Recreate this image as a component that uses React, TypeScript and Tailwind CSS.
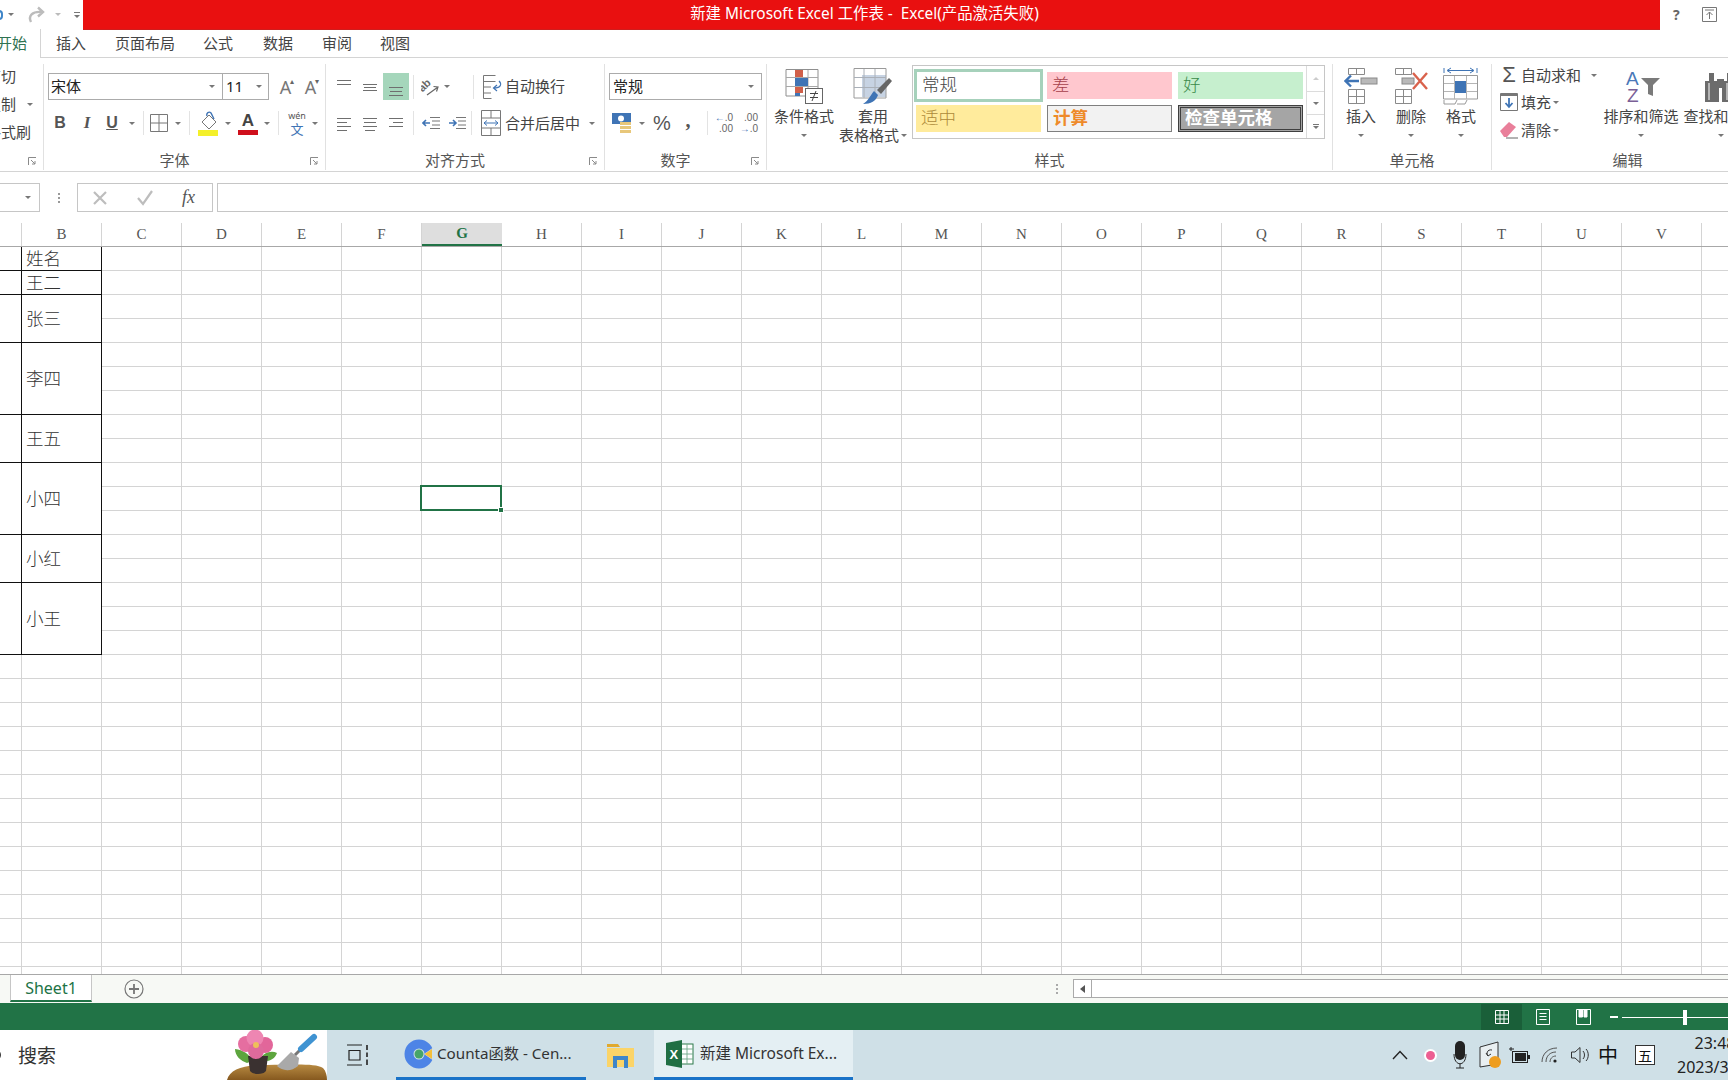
import type { ReactNode } from "react";

const columns = ["B", "C", "D", "E", "F", "G", "H", "I", "J", "K", "L", "M", "N", "O", "P", "Q", "R", "S", "T", "U", "V", ""];

const names = [
  { row: 0, span: "row-span-1", name: "姓名" },
  { row: 1, span: "row-span-1", name: "王二" },
  { row: 2, span: "row-span-2", name: "张三" },
  { row: 4, span: "row-span-3", name: "李四" },
  { row: 7, span: "row-span-2", name: "王五" },
  { row: 9, span: "row-span-3", name: "小四" },
  { row: 12, span: "row-span-2", name: "小红" },
  { row: 14, span: "row-span-3", name: "小王" },
];

const rowCount = 31;

function Caret({ className = "" }: { className?: string }) {
  return <span className={`inline-block h-0 w-0 shrink-0 border-x-[3px] border-t-[3px] border-x-transparent border-t-[#777] ${className}`} />;
}

function Sep({ className = "" }: { className?: string }) {
  return <span className={`block h-[24px] w-px shrink-0 bg-[#e3e3e3] ${className}`} />;
}

function Launcher() {
  return (
    <svg className="absolute bottom-[4px] right-[6px]" width="9" height="9" viewBox="0 0 9 9" fill="none" stroke="#8a8a8a" strokeWidth="1">
      <path d="M0.5 8V0.5H8" />
      <path d="M3 3l4 4M7 4v3H4" />
    </svg>
  );
}

function Group({ width, label, launcher, labelClass = "", children }: { width: string; label: string; launcher?: boolean; labelClass?: string; children: ReactNode }) {
  return (
    <section className={`relative flex h-[106px] shrink-0 flex-col border-r border-[#e1e1e1] ${width}`}>
      <div className="min-h-0 flex-1">{children}</div>
      <div className={`h-[20px] text-center text-[15px] leading-[20px] text-[#555] ${labelClass}`}>{label}</div>
      {launcher && <Launcher />}
    </section>
  );
}

function Lines({ y, align }: { y: number[]; align: "left" | "center" | "right" }) {
  return (
    <svg width="20" height="18" viewBox="0 0 20 18" stroke="#6f6f6f" strokeWidth="1">
      <path d={`M3 ${y[0]}.5H17`} />
      {align === "left" && <path d={`M3 ${y[1]}.5H13`} />}
      {align === "center" && <path d={`M4 ${y[1]}.5H16`} />}
      {align === "right" && <path d={`M7 ${y[1]}.5H17`} />}
      <path d={`M3 ${y[2]}.5H17`} />
      {y[3] !== undefined && <path d={`M${align === "center" ? 5 : 3} ${y[3]}.5H${align === "center" ? 15 : 13}`} />}
    </svg>
  );
}

function BigButton({ width, lines, caret = true, children }: { width: string; lines: string[]; caret?: boolean; children: ReactNode }) {
  return (
    <div className={`flex shrink-0 flex-col items-center ${width}`}>
      <div className="flex h-[43px] items-center justify-center">{children}</div>
      {lines.map((line) => (
        <div key={line} className="whitespace-nowrap text-[15px] leading-[19px] text-[#444]">
          {line}
        </div>
      ))}
      {caret && <Caret className="mt-[8px]" />}
    </div>
  );
}

function CondIcon() {
  return (
    <svg width="38" height="36" viewBox="0 0 38 36" fill="none">
      <path d="M1 1.5H33V28H1z" stroke="#8f8f8f" />
      <path d="M12 2V28M23 2V28M1 9.5H33M1 18.5H33" stroke="#a8a8a8" />
      <rect x="10" y="2" width="8" height="7" fill="#d0604a" />
      <rect x="10" y="10" width="13" height="8" fill="#3f74b5" />
      <rect x="10" y="19" width="8" height="6" fill="#d0604a" />
      <rect x="10" y="25" width="5" height="3" fill="#3f74b5" />
      <rect x="20.5" y="20.5" width="17" height="15" fill="#fff" stroke="#666" />
      <path d="M25 25.5H33M25 29.5H33M31 23L27 33" stroke="#444" />
    </svg>
  );
}

function TableIcon() {
  return (
    <svg width="40" height="38" viewBox="0 0 40 38" fill="none">
      <rect x="9" y="8" width="24" height="22" fill="#c7d3e3" />
      <path d="M1 1.5H33V31H1z" stroke="#9a9a9a" />
      <path d="M11 2V31M22 2V31M1 10.5H33M1 20.5H33" stroke="#aab0b8" />
      <path d="M24 23L36 11L39 14L28 27z" fill="#666" />
      <path d="M21 24l4 4c-2 6-7 9-15 9 5-3 7-8 11-13z" fill="#3f74b5" />
    </svg>
  );
}

function InsertIcon() {
  return (
    <svg width="34" height="36" viewBox="0 0 34 36" fill="none" stroke="#8a8a8a">
      <path d="M4.5 .5H20.5V6.5H4.5zM12.5 .5V6.5" />
      <rect x="17" y="10" width="16" height="6" fill="#b9b9b9" />
      <path d="M15 13H2M7 7.5L1.5 13L7 18.5" stroke="#3f74b5" strokeWidth="2.4" />
      <path d="M4.5 21.5H20.5V35.5H4.5zM12.5 21.5V35.5M4.5 28.5H20.5" />
    </svg>
  );
}

function DeleteIcon() {
  return (
    <svg className="ml-[2px]" width="36" height="36" viewBox="0 0 36 36" fill="none" stroke="#8a8a8a">
      <path d="M1.5 .5H17.5V6.5H1.5zM9.5 .5V6.5" />
      <rect x="8" y="10" width="12" height="6" fill="#b9b9b9" />
      <path d="M19 5L33 21M33 5L19 21" stroke="#d9624c" strokeWidth="2.4" />
      <path d="M1.5 21.5H17.5V35.5H1.5zM9.5 21.5V35.5M1.5 28.5H17.5" />
    </svg>
  );
}

function FormatIcon() {
  return (
    <svg width="36" height="38" viewBox="0 0 36 38" fill="none">
      <path d="M1 1V6M34 1V6" stroke="#3f74b5" />
      <path d="M5 3.5H30M8 1L4 3.5L8 6M27 1L31 3.5L27 6" stroke="#3f74b5" />
      <path d="M.5 8.5H34.5V32H.5z" stroke="#999" />
      <path d="M11.5 9V32M23.5 9V32M1 16.5H34M1 24.5H34" stroke="#b5b5b5" />
      <rect x="12" y="14" width="11" height="12" fill="#3f74b5" />
      <path d="M1 33V37H12L14 33M14 37H22L24 33" stroke="#999" />
    </svg>
  );
}

function SortIcon() {
  return (
    <svg className="ml-[4px]" width="36" height="34" viewBox="0 0 36 34" fill="none">
      <text x="1" y="16" fontFamily="Liberation Sans, sans-serif" fontSize="19" fill="#4a78b8">A</text>
      <text x="2" y="33" fontFamily="Liberation Sans, sans-serif" fontSize="19" fill="#7a5f96">Z</text>
      <path d="M16 9H35L28 16V27L23 25V16z" fill="#7a7a7a" />
    </svg>
  );
}

function BinocularIcon() {
  return (
    <svg width="34" height="32" viewBox="0 0 34 32" fill="#6c6c6c">
      <rect x="5" y="3" width="5" height="8" />
      <rect x="23" y="3" width="5" height="8" />
      <rect x="1" y="11" width="14" height="21" />
      <rect x="18" y="11" width="14" height="21" />
      <rect x="13" y="9" width="7" height="9" />
      <path d="M5 13V30M23 13V30" stroke="#fff" strokeWidth="1" />
    </svg>
  );
}

function Flowerpot() {
  return (
    <svg width="100" height="50" viewBox="0 0 100 50" className="shrink-0">
      <defs>
        <linearGradient id="mound" x1="0" y1="0" x2="0" y2="1">
          <stop offset="0" stopColor="#b78a42" />
          <stop offset="1" stopColor="#86591f" />
        </linearGradient>
      </defs>
      <path d="M0 50C3 39 17 35 40 35S88 33 96 38C99 41 100 46 100 50z" fill="url(#mound)" />
      <path d="M20 33C14 31 8 26 8 19C16 20 23 24 25 31zM35 31C42 32 48 29 50 23C44 20 36 23 33 29z" fill="#5da53e" />
      <path d="M21 26H41L39 41C36 45 26 45 23 41z" fill="#3a3130" />
      <circle cx="19" cy="14" r="8" fill="#e56ea0" />
      <circle cx="38" cy="15" r="8" fill="#e2669a" />
      <circle cx="28" cy="8" r="8.5" fill="#ee86b2" />
      <circle cx="29" cy="21" r="8" fill="#df6a9c" />
      <circle cx="29" cy="15" r="3" fill="#eec05a" />
      <path d="M50 36L64 22L72 28L71 36C64 42 55 41 50 36z" fill="#a9a9a9" />
      <path d="M68 25L74 19" stroke="#777" strokeWidth="3" />
      <path d="M74 19L87 7" stroke="#3f93d2" strokeWidth="6" strokeLinecap="round" />
    </svg>
  );
}

function TaskViewIcon() {
  return (
    <svg width="22" height="22" viewBox="0 0 22 22" fill="none" stroke="#222" strokeWidth="1.2">
      <path d="M0 1H15M0 21H15M2 6.5H13V16H2z" />
      <path d="M20 1V6M20 8.5V13M20 15.5V21" strokeWidth="1.6" />
    </svg>
  );
}

function CountaIcon() {
  return (
    <svg width="30" height="30" viewBox="0 0 30 30">
      <circle cx="15" cy="15" r="10" fill="none" stroke="#4d84e6" strokeWidth="9" />
      <circle cx="15" cy="15" r="4.5" fill="#46a56a" />
      <path d="M30 8L20 15L30 22z" fill="#cfe0e7" />
      <path d="M28 10L20.5 15L28 20z" fill="#f4bf3a" />
    </svg>
  );
}

function FolderIcon() {
  return (
    <svg width="27" height="26" viewBox="0 0 27 26">
      <path d="M0 2H11L13 5H0z" fill="#e0a92e" />
      <rect x="0" y="6" width="27" height="19" fill="#fbd468" />
      <path d="M6 26V14H21V26H17V18H10V26z" fill="#3f86c9" />
    </svg>
  );
}

function ExcelIcon() {
  return (
    <svg width="28" height="28" viewBox="0 0 28 28">
      <rect x="11" y="4" width="16" height="20" fill="#fff" stroke="#2c7a4b" />
      <path d="M15 4V24M21 4V24M11 9H27M11 14H27M11 19H27" stroke="#6fa88a" strokeWidth=".9" />
      <path d="M0 3L16 0V28L0 25z" fill="#1f6e43" />
      <text x="3.5" y="19" fontFamily="Liberation Sans, sans-serif" fontWeight="700" fontSize="13" fill="#fff">X</text>
    </svg>
  );
}

export default function App() {
  return (
    <div className="flex h-[1080px] w-[1728px] flex-col overflow-hidden bg-white font-['Noto_Sans','Noto_Sans_CJK_SC',sans-serif] text-[#444]">
      {/* title bar */}
      <header className="flex h-[29px] shrink-0">
        <div className="flex w-[83px] shrink-0 items-center">
          <span className="ml-[-5px] h-[10px] w-[8px] rounded-full border-2 border-[#3f86c9]" />
          <Caret className="ml-[5px]" />
          <svg className="ml-[13px]" width="20" height="18" viewBox="0 0 20 18" fill="none" stroke="#bcbcbc" strokeWidth="2.4">
            <path d="M4 16C1 10 5 5 15 6M11 1.5L16 6L11 10.5" />
          </svg>
          <Caret className="ml-[8px] opacity-50" />
          <span className="ml-[13px] flex flex-col items-center gap-[2px]">
            <span className="h-px w-[6px] bg-[#777]" />
            <Caret />
          </span>
        </div>
        <div className="flex flex-1 items-center justify-center bg-[#e91010] pb-[2px] pr-[14px] text-[15.4px] text-white shadow-[0_1px_0_#cf1d1d]">
          新建 Microsoft Excel 工作表 -&nbsp; Excel(产品激活失败)
        </div>
        <div className="flex w-[68px] shrink-0 items-center pl-[13px] text-[#666]">
          <span className="text-[14px] font-bold">?</span>
          <svg className="ml-[22px]" width="15" height="15" viewBox="0 0 15 15" fill="none" stroke="#777">
            <path d="M.5 .5H14.5V14.5H.5zM3 3H12M7.5 12V5M4.5 8L7.5 5L10.5 8" />
          </svg>
        </div>
      </header>

      {/* tabs */}
      <nav className="flex h-[29px] shrink-0 items-stretch border-b border-[#d4d4d4] text-[15px]">
        <div className="relative z-10 -mb-px flex w-[41px] justify-end border-r border-[#d4d4d4] bg-white pr-[13px] leading-[28px] text-[#2f7251]">
          <span className="whitespace-nowrap">开始</span>
        </div>
        <div className="ml-[15px] leading-[28px]">插入</div>
        <div className="ml-[29px] leading-[28px]">页面布局</div>
        <div className="ml-[28px] leading-[28px]">公式</div>
        <div className="ml-[30px] leading-[28px]">数据</div>
        <div className="ml-[29px] leading-[28px]">审阅</div>
        <div className="ml-[28px] leading-[28px]">视图</div>
      </nav>

      {/* ribbon */}
      <div className="flex h-[114px] shrink-0 border-b border-[#d4d4d4] pt-[6px]">
        <Group width="w-[44px]" label="" launcher>
          <div className="-mt-[2px] flex flex-col text-[15px]">
            <div className="flex h-[28px] w-[16px] items-center justify-end whitespace-nowrap">剪切</div>
            <div className="flex h-[28px] items-center">
              <div className="flex w-[16px] justify-end whitespace-nowrap">复制</div>
              <Caret className="ml-[11px]" />
            </div>
            <div className="flex h-[28px] w-[31px] items-center justify-end whitespace-nowrap">格式刷</div>
          </div>
        </Group>

        <Group width="w-[282px]" label="字体" launcher labelClass="pr-[20px]">
          <div className="ml-[4px] mt-[9px] flex h-[27px] items-center">
            <div className="flex h-full w-[175px] items-center justify-between border border-[#ababab] pl-[2px] pr-[7px] text-[15px] text-[#222]">
              宋体
              <Caret />
            </div>
            <div className="-ml-px flex h-full w-[47px] items-center justify-between border border-[#ababab] pl-[3px] pr-[6px] text-[15px] text-[#222]">
              11
              <Caret />
            </div>
            <div className="ml-[6px] flex w-[24px] items-start justify-center text-[18px] leading-[20px] text-[#777]">
              A<span className="-ml-px text-[8px] leading-[8px] text-[#666]">▴</span>
            </div>
            <div className="ml-[1px] flex w-[24px] items-start justify-center text-[18px] leading-[20px] text-[#777]">
              A<span className="-ml-px text-[8px] leading-[8px] text-[#666]">▾</span>
            </div>
          </div>
          <div className="ml-[3px] mt-[8px] flex h-[30px] items-center">
            <div className="w-[26px] text-center font-['Liberation_Sans',sans-serif] text-[16px] font-bold text-[#555]">B</div>
            <div className="ml-[1px] w-[26px] text-center font-['Liberation_Serif',serif] text-[17px] font-bold italic text-[#555]">I</div>
            <div className="w-[24px] text-center font-['Liberation_Sans',sans-serif] text-[16px] font-bold text-[#555] underline">U</div>
            <Caret className="ml-[5px]" />
            <Sep className="ml-[8px]" />
            <svg className="ml-[6px]" width="18" height="18" viewBox="0 0 18 18" fill="none" stroke="#777">
              <path d="M.5 .5H17.5V17.5H.5zM9 1V17M1 9H17" />
            </svg>
            <Caret className="ml-[7px]" />
            <Sep className="ml-[8px]" />
            <svg className="ml-[8px]" width="22" height="25" viewBox="0 0 22 25" fill="none">
              <path d="M4 11L11 4L18 11L11 18z" stroke="#777" fill="#fff" />
              <path d="M9 5C8 2 11 0 13 2L16 8" stroke="#3f74b5" strokeWidth="1.4" />
              <rect x="0" y="19" width="20" height="6" fill="#f4f02a" />
            </svg>
            <Caret className="ml-[5px]" />
            <div className="ml-[7px] flex w-[20px] flex-col items-center">
              <span className="font-['Liberation_Sans',sans-serif] text-[17px] font-bold leading-[18px] text-[#444]">A</span>
              <span className="h-[5px] w-[20px] bg-[#cf0f1c]" />
            </div>
            <Caret className="ml-[6px]" />
            <Sep className="ml-[8px]" />
            <div className="ml-[8px] flex w-[20px] flex-col items-center text-[#3f74b5]">
              <span className="h-[11px] text-[9px] leading-[10px] text-[#555]">wén</span>
              <span className="h-[14px] text-[13px] leading-[14px]">文</span>
            </div>
            <Caret className="ml-[5px]" />
          </div>
        </Group>

        <Group width="w-[279px]" label="对齐方式" launcher labelClass="pr-[20px]">
          <div className="ml-[5px] mt-[9px] flex h-[27px] items-center">
            <div className="flex w-[26px] justify-center"><Lines y={[2, 6, 6]} align="left" /></div>
            <div className="flex w-[26px] justify-center"><Lines y={[6, 9, 12]} align="center" /></div>
            <div className="flex h-full w-[26px] items-end justify-center bg-[#a5d6bb] pb-[3px]"><Lines y={[8, 12, 16]} align="center" /></div>
            <Sep className="ml-[4px]" />
            <svg className="ml-[7px]" width="20" height="22" viewBox="0 0 20 22" fill="none">
              <text x="0" y="13" transform="rotate(-45 5 13)" fontFamily="Liberation Sans, sans-serif" fontSize="11" fontWeight="700" fill="#666">ab</text>
              <path d="M6 19L17 11M12.5 10.5L17 11L15.5 15.5" stroke="#666" strokeWidth="1.2" />
            </svg>
            <Caret className="ml-[3px]" />
            <span className="w-[23px]" />
            <Sep />
            <svg className="ml-[9px]" width="20" height="24" viewBox="0 0 20 24" fill="none" stroke="#777">
              <path d="M.5 .5H12.5M.5 .5V23.5H8.5M.5 6.5H12.5M.5 12H8M.5 18H8" />
              <path d="M16 6C19 9 18 13 11 13M14 10L10.5 13L14 16" stroke="#3f74b5" strokeWidth="1.2" />
            </svg>
            <span className="ml-[2px] whitespace-nowrap text-[15px] text-[#444]">自动换行</span>
          </div>
          <div className="ml-[5px] mt-[8px] flex h-[30px] items-center">
            <div className="flex w-[26px] justify-center"><Lines y={[4, 8, 12, 16]} align="left" /></div>
            <div className="flex w-[26px] justify-center"><Lines y={[4, 8, 12, 16]} align="center" /></div>
            <div className="flex w-[26px] justify-center"><Lines y={[4, 8, 12]} align="right" /></div>
            <Sep className="ml-[4px]" />
            <svg className="ml-[8px]" width="18" height="14" viewBox="0 0 18 14" fill="none" stroke="#777">
              <path d="M8 1.5H18M10 5H18M10 9H18M8 12.5H18" />
              <path d="M8 7H1M4 4L1 7L4 10" stroke="#3f74b5" strokeWidth="1.6" />
            </svg>
            <svg className="ml-[8px]" width="18" height="14" viewBox="0 0 18 14" fill="none" stroke="#777">
              <path d="M8 1.5H18M10 5H18M10 9H18M8 12.5H18" />
              <path d="M1 7H8M5 4L8 7L5 10" stroke="#3f74b5" strokeWidth="1.6" />
            </svg>
            <span className="w-[5px]" />
            <Sep />
            <svg className="ml-[9px]" width="20" height="26" viewBox="0 0 20 26" fill="none" stroke="#777">
              <path d="M.5 .5H19.5V25.5H.5zM.5 8H19.5M.5 18H19.5M10 1V8M10 18V25" />
              <path d="M3 13H17M6 10.5L3 13L6 15.5M14 10.5L17 13L14 15.5" stroke="#3f74b5" />
            </svg>
            <span className="ml-[4px] whitespace-nowrap text-[15px] text-[#444]">合并后居中</span>
            <Caret className="ml-[9px]" />
          </div>
        </Group>

        <Group width="w-[162px]" label="数字" launcher labelClass="pr-[20px]">
          <div className="ml-[4px] mt-[9px] flex h-[27px] w-[153px] items-center justify-between border border-[#ababab] pl-[3px] pr-[7px] text-[15px] text-[#222]">
            常规
            <Caret />
          </div>
          <div className="ml-[6px] mt-[8px] flex h-[30px] items-center">
            <svg width="22" height="22" viewBox="0 0 22 22">
              <rect x="1" y="1" width="19" height="11" fill="#3f74b5" />
              <circle cx="10" cy="6.5" r="3" fill="#fff" />
              <rect x="9" y="10" width="11" height="3" fill="#e8c77a" />
              <rect x="9" y="14" width="11" height="3" fill="#e8c77a" />
              <rect x="9" y="18" width="11" height="3" fill="#e8c77a" />
            </svg>
            <Caret className="ml-[6px]" />
            <span className="ml-[6px] w-[22px] text-center font-['Liberation_Sans',sans-serif] text-[20px] text-[#555]">%</span>
            <span className="ml-[3px] -mt-[6px] w-[24px] text-center font-['Liberation_Serif',serif] text-[20px] font-bold leading-[20px] text-[#555]">,</span>
            <Sep className="ml-[7px]" />
            <div className="ml-[3px] w-[22px] text-right font-['Liberation_Sans',sans-serif] text-[10px] leading-[11px] text-[#666]">
              <span className="text-[#3f74b5]">←</span>.0
              <br />
              .00
            </div>
            <div className="ml-[3px] w-[22px] text-right font-['Liberation_Sans',sans-serif] text-[10px] leading-[11px] text-[#666]">
              .00
              <br />
              <span className="text-[#3f74b5]">→</span>.0
            </div>
          </div>
        </Group>

        <Group width="w-[566px]" label="样式" labelClass="">
          <div className="flex">
            <BigButton width="w-[68px] ml-[3px]" lines={["条件格式"]}>
              <CondIcon />
            </BigButton>
            <div className="flex w-[70px] shrink-0 flex-col items-center">
              <div className="flex h-[43px] items-center justify-center">
                <TableIcon />
              </div>
              <div className="text-[15px] leading-[19px]">套用</div>
              <div className="flex items-center whitespace-nowrap text-[15px] leading-[19px]">
                表格格式
                <Caret className="ml-[2px]" />
              </div>
            </div>
            <div className="ml-[4px] mt-[1px] flex h-[74px] w-[413px] shrink-0 border border-[#c6c6c6]">
              <div className="grid flex-1 grid-cols-[133px_131px_125px] grid-rows-[33px_33px] pl-[1px] pt-[3px] font-['Liberation_Serif','Noto_Sans_CJK_SC',serif] text-[17.5px] font-light">
                <div className="flex h-[33px] w-[129px] items-center border-[3px] border-[#a6d1bb] pl-[5px] text-[#444]">常规</div>
                <div className="my-[3px] flex h-[27px] w-[125px] items-center bg-[#ffc7ce] pl-[5px] text-[#a5404b]">差</div>
                <div className="my-[3px] flex h-[27px] w-[125px] items-center bg-[#c6efce] pl-[5px] text-[#3a8a4a]">好</div>
                <div className="my-[3px] ml-[2px] flex h-[27px] w-[125px] items-center bg-[#ffeb9c] pl-[5px] text-[#ad8a3a]">适中</div>
                <div className="my-[3px] flex h-[27px] w-[125px] items-center border border-[#7f7f7f] bg-[#f2f2f2] pl-[5px] font-bold text-[#ee8a2a]">计算</div>
                <div className="my-[3px] flex h-[27px] w-[125px] items-center whitespace-nowrap border-[3px] border-double border-[#3f3f3f] bg-[#a5a5a5] pl-[4px] font-bold text-white">检查单元格</div>
              </div>
              <div className="flex w-[18px] shrink-0 flex-col border-l border-[#dcdcdc]">
                <div className="flex h-[26px] items-center justify-center border-b border-[#dcdcdc]"><span className="h-0 w-0 border-x-[3px] border-b-[3px] border-x-transparent border-b-[#ccc]" /></div>
                <div className="flex h-[23px] items-center justify-center border-b border-[#dcdcdc]"><Caret /></div>
                <div className="flex flex-1 flex-col items-center justify-center gap-[1px]"><span className="h-px w-[6px] bg-[#777]" /><Caret /></div>
              </div>
            </div>
          </div>
        </Group>

        <Group width="w-[159px]" label="单元格">
          <div className="ml-[3px] flex">
            <BigButton width="w-[50px]" lines={["插入"]}>
              <InsertIcon />
            </BigButton>
            <BigButton width="w-[50px]" lines={["删除"]}>
              <DeleteIcon />
            </BigButton>
            <BigButton width="w-[50px]" lines={["格式"]}>
              <FormatIcon />
            </BigButton>
          </div>
        </Group>

        <Group width="w-[272px]" label="编辑">
          <div className="flex">
            <div className="-mt-[2px] ml-[5px] mr-[1px] flex w-[105px] shrink-0 flex-col text-[15px]">
              <div className="flex h-[26px] items-center">
                <span className="flex h-[24px] w-[24px] items-center justify-center font-['Liberation_Sans',sans-serif] text-[22px] leading-[24px] text-[#555]">Σ</span>
                <span className="whitespace-nowrap">自动求和</span>
                <Caret className="ml-[10px]" />
              </div>
              <div className="flex h-[28px] items-center">
                <span className="flex w-[24px] justify-center">
                  <svg width="18" height="18" viewBox="0 0 18 18" fill="none">
                    <path d="M.5 .5H17.5V17.5H.5z" stroke="#777" />
                    <rect x="1" y="1" width="16" height="2" fill="#777" />
                    <path d="M9 5V14M5.5 10L9 14L12.5 10" stroke="#3f74b5" strokeWidth="1.8" />
                  </svg>
                </span>
                <span className="whitespace-nowrap">填充</span>
                <Caret className="ml-[2px]" />
              </div>
              <div className="flex h-[28px] items-center">
                <span className="flex w-[24px] justify-center">
                  <svg width="20" height="18" viewBox="0 0 20 18">
                    <path d="M1 10L10 1L17 6L8 16H5z" fill="#e97f9a" />
                    <path d="M7 17H19" stroke="#666" />
                  </svg>
                </span>
                <span className="whitespace-nowrap">清除</span>
                <Caret className="ml-[2px]" />
              </div>
            </div>
            <BigButton width="w-[76px]" lines={["排序和筛选"]}>
              <SortIcon />
            </BigButton>
            <div className="ml-[4px] flex w-[76px] shrink-0 flex-col items-center">
              <div className="flex h-[43px] items-center justify-center">
                <BinocularIcon />
              </div>
              <div className="whitespace-nowrap text-[15px] leading-[19px]">查找和选择</div>
              <Caret className="mt-[8px]" />
            </div>
          </div>
        </Group>
      </div>

      {/* formula bar */}
      <div className="mt-[11px] flex h-[29px] shrink-0 items-stretch">
        <div className="flex w-[40px] items-center justify-end border-y border-r border-[#c6c6c6] pr-[8px]">
          <Caret />
        </div>
        <div className="flex w-[37px] flex-col items-center justify-center gap-[2px]">
          <span className="h-[2px] w-[2px] bg-[#999]" />
          <span className="h-[2px] w-[2px] bg-[#999]" />
          <span className="h-[2px] w-[2px] bg-[#999]" />
        </div>
        <div className="flex w-[136px] items-center border border-[#c6c6c6] pl-[15px]">
          <svg width="14" height="14" viewBox="0 0 14 14" stroke="#bdbdbd" strokeWidth="2.2">
            <path d="M1 1L13 13M13 1L1 13" />
          </svg>
          <svg className="ml-[29px]" width="18" height="16" viewBox="0 0 18 16" fill="none" stroke="#bdbdbd" strokeWidth="2.2">
            <path d="M2 8L7 14L16 1" />
          </svg>
          <span className="ml-[28px] font-['Liberation_Serif',serif] text-[18px] italic text-[#555]">fx</span>
        </div>
        <div className="ml-[4px] flex-1 border border-[#c6c6c6] border-r-0" />
      </div>

      {/* column header */}
      <div className="mt-[11px] flex h-[24px] w-[1782px] shrink-0 border-b border-[#a8a8a8] font-['Liberation_Serif',serif] text-[15px] text-[#555]">
        <div className="w-[22px] shrink-0 border-r border-[#d4d4d4]" />
        {columns.map((col) =>
          col === "G" ? (
            <div key="G" className="flex w-[80px] shrink-0 items-center justify-center border-b-2 border-[#217346] bg-[#dedede] font-bold text-[#217346]">
              {col}
            </div>
          ) : (
            <div key={col || "W"} className="flex w-[80px] shrink-0 items-center justify-center border-r border-[#d4d4d4]">
              {col}
            </div>
          ),
        )}
      </div>

      {/* sheet */}
      <div className="min-h-0 flex-1 overflow-hidden">
        <div className="grid w-[1782px] grid-cols-[22px_repeat(22,80px)] auto-rows-[24px] font-['Liberation_Serif','Noto_Sans_CJK_SC',serif] text-[17.5px] text-[#333]">
          {Array.from({ length: rowCount }, (_, row) => {
            const merged = names.find((n) => n.row === row);
            return [
              merged && <div key={`a${row}`} className={`${merged.span} border-b border-r border-[#111]`} />,
              merged && (
                <div key={`b${row}`} className={`${merged.span} flex items-center border-b border-r border-[#111] pl-[4px] pt-[2px] font-light`}>
                  {merged.name}
                </div>
              ),
              row >= 17 && <div key={`a${row}`} className="border-b border-r border-[#d4d4d4]" />,
              row >= 17 && <div key={`b${row}`} className="border-b border-r border-[#d4d4d4]" />,
              ...columns.slice(1).map((col, i) => (
                <div key={`${row}-${i}`} className="relative border-b border-r border-[#d4d4d4]">
                  {row === 10 && col === "G" && (
                    <div className="absolute -bottom-px -left-[2px] -right-px -top-[2px] z-10 border-2 border-[#217346]">
                      <span className="absolute -bottom-[4px] -right-[4px] h-[6px] w-[6px] border border-white bg-[#217346]" />
                    </div>
                  )}
                </div>
              )),
            ];
          })}
        </div>
      </div>

      {/* sheet tabs */}
      <div className="flex h-[29px] shrink-0 items-stretch border-t border-[#a8a8a8] bg-[#f7f9f5]">
        <div className="ml-[10px] flex h-[27px] w-[82px] items-center justify-center border-x border-[#c6c6c6] border-b-2 border-b-[#217346] bg-white text-[16px] text-[#217346]">
          Sheet1
        </div>
        <div className="ml-[32px] flex items-center">
          <svg width="20" height="20" viewBox="0 0 20 20" fill="none" stroke="#777" strokeWidth="1.2">
            <circle cx="10" cy="10" r="9" />
            <path d="M10 5V15M5 10H15" strokeWidth="1.8" />
          </svg>
        </div>
        <div className="ml-[904px] flex w-[17px] flex-col items-center justify-center gap-[2px]">
          <span className="h-[2px] w-[2px] bg-[#aaa]" />
          <span className="h-[2px] w-[2px] bg-[#aaa]" />
          <span className="h-[2px] w-[2px] bg-[#aaa]" />
        </div>
        <div className="mb-[5px] ml-[8px] mt-[4px] flex flex-1 border border-[#aaa] border-r-0 bg-white">
          <div className="flex w-[18px] items-center justify-center border-r border-[#aaa]">
            <span className="h-0 w-0 border-y-[4px] border-r-[5px] border-y-transparent border-r-[#555]" />
          </div>
        </div>
      </div>

      {/* status bar */}
      <div className="flex h-[27px] shrink-0 items-stretch bg-[#217346] pt-px">
        <div className="ml-[1481px] flex w-[41px] items-center justify-center bg-[#1a5f39]">
          <svg width="14" height="14" viewBox="0 0 14 14" fill="none" stroke="#fff">
            <path d="M.5 .5H13.5V13.5H.5zM5 1V13M9 1V13M1 5H13M1 9H13" />
          </svg>
        </div>
        <div className="flex w-[41px] items-center justify-center">
          <svg width="14" height="16" viewBox="0 0 14 16" fill="none" stroke="#fff">
            <path d="M.5 .5H13.5V15.5H.5zM3.5 4.5H10.5M3.5 7.5H10.5M3.5 10.5H10.5" />
          </svg>
        </div>
        <div className="flex w-[41px] items-center justify-center">
          <svg width="15" height="16" viewBox="0 0 15 16" fill="none" stroke="#fff">
            <path d="M.5 .5H14.5V15.5H.5z" />
            <path d="M3 1H6.5V8H3zM8 1H11V8H8z" fill="#fff" />
          </svg>
        </div>
        <div className="ml-[6px] flex flex-1 items-center">
          <span className="h-[2px] w-[8px] bg-white" />
          <div className="relative ml-[4px] h-px flex-1 bg-white">
            <span className="absolute -top-[7px] left-[61px] h-[15px] w-[4px] bg-white" />
          </div>
        </div>
      </div>

      {/* taskbar */}
      <footer className="flex h-[50px] shrink-0 items-stretch bg-[#cfe0e7]">
        <div className="flex w-[327px] shrink-0 items-end justify-between bg-white">
          <div className="flex h-full items-center whitespace-nowrap font-['Noto_Sans_CJK_SC',sans-serif] text-[19px] text-[#333]">
            <span className="-ml-[11px] h-[12px] w-[12px] rounded-full border border-[#333]" />
            <span className="ml-[17px]">搜索</span>
          </div>
          <Flowerpot />
        </div>
        <div className="flex w-[69px] shrink-0 items-center justify-start pl-[20px]">
          <TaskViewIcon />
        </div>
        <div className="flex w-[190px] shrink-0 items-center border-b-[3px] border-[#1a73c8] pl-[8px]">
          <CountaIcon />
          <span className="ml-[3px] whitespace-nowrap text-[15.2px] text-[#333]">Counta函数 - Cen...</span>
        </div>
        <div className="flex w-[68px] shrink-0 items-center justify-center">
          <FolderIcon />
        </div>
        <div className="flex w-[199px] shrink-0 items-center border-b-[3px] border-[#1a73c8] bg-[#e4eff3] pl-[12px]">
          <ExcelIcon />
          <span className="ml-[6px] whitespace-nowrap text-[15.5px] text-[#333]">新建 Microsoft Ex...</span>
        </div>
        <div className="ml-[532px] flex shrink-0 items-center">
          <div className="flex w-[30px] justify-center">
            <svg width="16" height="10" viewBox="0 0 16 10" fill="none" stroke="#222" strokeWidth="1.4">
              <path d="M1 9L8 1.5L15 9" />
            </svg>
          </div>
          <div className="flex w-[30px] justify-center">
            <span className="h-[9px] w-[9px] rounded-full bg-[#ec5f92] shadow-[0_0_0_2px_#fff]" />
          </div>
          <div className="flex w-[30px] justify-center">
            <svg width="14" height="28" viewBox="0 0 14 28" fill="none">
              <rect x="2" y="0" width="10" height="19" rx="5" fill="#222" />
              <path d="M1 13C1 26 13 26 13 13M7 23V27M3 27H11" stroke="#222" />
            </svg>
          </div>
          <div className="flex w-[30px] justify-center">
            <svg width="24" height="28" viewBox="0 0 24 28" fill="none">
              <path d="M2 6L20 1V23L2 26z" stroke="#333" fill="#e9eff1" />
              <path d="M14 9C9 8 8 13 10 15M8 12L10 15L13 13" stroke="#333" />
              <circle cx="17" cy="21" r="6" fill="#ee9d1f" />
            </svg>
          </div>
          <div className="flex w-[30px] justify-center">
            <svg width="22" height="18" viewBox="0 0 22 18" fill="none">
              <path d="M0 3H5M2 1V5" stroke="#222" />
              <rect x="3.5" y="5.5" width="15" height="11" stroke="#222" />
              <rect x="6" y="7" width="11" height="8" fill="#222" />
              <rect x="19" y="9" width="2" height="4" fill="#222" />
            </svg>
          </div>
          <div className="flex w-[30px] justify-center">
            <svg width="18" height="18" viewBox="0 0 18 18" fill="none" stroke="#555">
              <path d="M1 16C1 8 7 2 16 2M5 16C5 10 9 6 15 6M9 16C9 13 11 10 15 10" />
              <circle cx="14" cy="15" r="1.6" fill="#222" stroke="none" />
            </svg>
          </div>
          <div className="flex w-[30px] justify-center">
            <svg width="20" height="18" viewBox="0 0 20 18" fill="none" stroke="#333">
              <path d="M1.5 6H5L10 1.5V16.5L5 12H1.5zM13 5C15 7 15 11 13 13M16 3C19 6 19 12 16 15" />
            </svg>
          </div>
          <div className="w-[26px] text-center font-['Noto_Sans_CJK_SC',sans-serif] text-[20px] leading-none text-[#111]">中</div>
          <div className="ml-[14px] flex h-[20px] w-[20px] items-center justify-center border border-[#333] bg-white font-['Noto_Sans_CJK_SC',sans-serif] text-[14px] leading-none text-[#111]">五</div>
          <div className="ml-[22px] w-[76px] shrink-0 text-center text-[16px] leading-[24px] text-[#222]">
            <div>23:48</div>
            <div>2023/3/31</div>
          </div>
        </div>
      </footer>
    </div>
  );
}
